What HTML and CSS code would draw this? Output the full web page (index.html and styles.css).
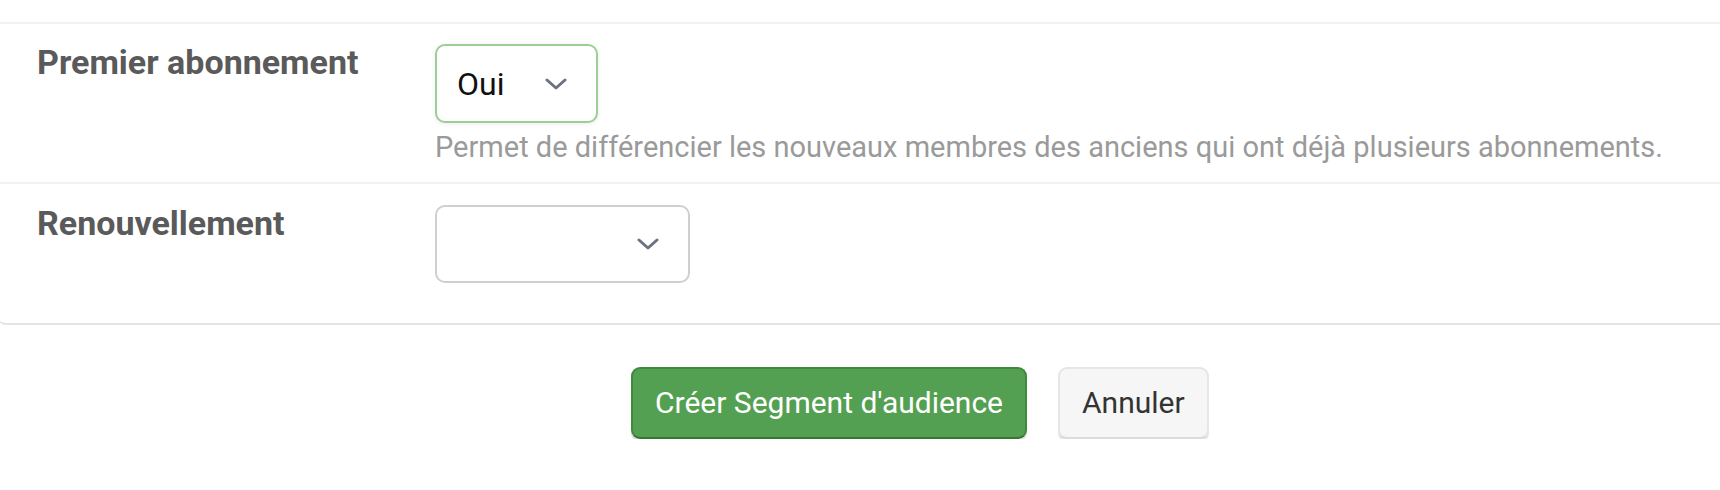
FILE: index.html
```html
<!DOCTYPE html>
<html lang="fr">

<head>
	<meta charset="UTF-8">
	<title>Segment d'audience</title>
	<link rel="stylesheet" href="styles.css">
</head>

<body>
	<div class="card">
		<div class="row">
			<div class="label">Premier abonnement</div>
			<div class="field">
				<div class="select select-active">
					<span class="value">Oui</span>
					<svg class="chevron" width="22" height="12" viewBox="0 0 22 12">
						<polyline points="2,2 11,10 20,2" />
					</svg>
				</div>
				<p class="help">Permet de différencier les nouveaux membres des anciens qui ont déjà plusieurs abonnements.</p>
			</div>
		</div>
		<div class="row row-last">
			<div class="label">Renouvellement</div>
			<div class="field">
				<div class="select select-wide">
					<span class="value"></span>
					<svg class="chevron" width="22" height="12" viewBox="0 0 22 12">
						<polyline points="2,2 11,10 20,2" />
					</svg>
				</div>
			</div>
		</div>
	</div>
	<div class="actions">
		<button type="button" class="btn btn-success">Créer Segment d'audience</button>
		<button type="button" class="btn btn-default">Annuler</button>
	</div>
</body>

</html>
```

FILE: styles.css
```css
* {
	margin: 0;
	padding: 0;
	box-sizing: border-box;
}

body {
	background: #fff;
	font-family: Roboto, "Liberation Sans", sans-serif;
	overflow: hidden;
}

.card {
	margin: 0 -12px 0 -2px;
	padding-top: 22px;
	background: #fff;
	border-bottom: 2px solid #e4e4e7;
	border-radius: 0 0 8px 8px;
}

.row {
	display: grid;
	grid-template-columns: 398px 1fr;
	padding: 20px 0 17px 39px;
	border-top: 2px solid #f2f2f2;
}

.row-last {
	padding-top: 21px;
	padding-bottom: 40px;
}

.label {
	font-size: 34px;
	font-weight: bold;
	line-height: 36px;
	color: #5a5a5a;
}

.select {
	display: flex;
	align-items: center;
	justify-content: space-between;
	width: 163px;
	height: 79px;
	padding: 0 29px 0 20px;
	border: 2px solid #cfcfcf;
	border-radius: 10px;
	background: #fff;
}

.select-active {
	border-color: #9bcf95;
	box-shadow: 0 1px 5px rgba(0, 0, 0, 0.08);
}

.select-wide {
	width: 255px;
	height: 78px;
}

.value {
	font-size: 32px;
	color: #111;
}

.chevron {
	fill: none;
	stroke: #6b7280;
	stroke-width: 3;
	stroke-linecap: round;
	stroke-linejoin: round;
}

.help {
	margin-top: 6px;
	font-size: 29px;
	line-height: 36px;
	color: #9a9a9a;
}

.actions {
	display: flex;
	gap: 31px;
	padding: 42px 0 0 631px;
}

.btn {
	font-family: Roboto, "Liberation Sans", sans-serif;
	font-size: 30px;
	line-height: 40px;
	height: 72px;
	padding: 0 22px;
	border-radius: 9px;
	cursor: pointer;
}

.btn-success {
	color: #fff;
	background: #54a052;
	border: 2px solid #3f8a3c;
	border-bottom-color: #36762f;
	box-shadow: 0 3px 0 #e2e2e6;
}

.btn-default {
	color: #333;
	background: #f6f6f6;
	border: 2px solid #e6e6e8;
	border-bottom-color: #dcdcde;
	box-shadow: 0 3px 0 #e4e4e7;
	padding: 0 22px;
}
```
